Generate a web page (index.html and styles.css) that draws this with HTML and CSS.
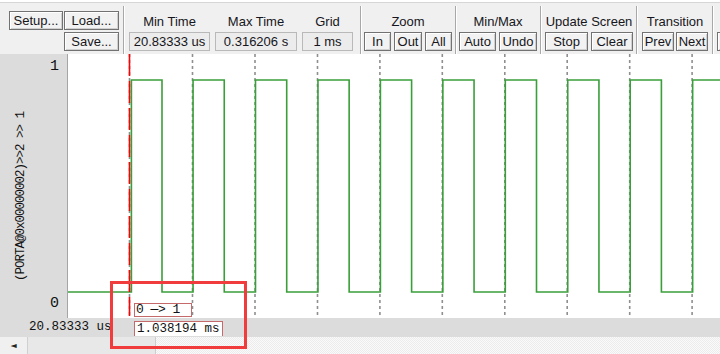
FILE: index.html
```html
<!DOCTYPE html>
<html lang="en">
<head>
  <meta charset="UTF-8">
  <title>Logic Analyzer</title>
  <link rel="stylesheet" href="styles.css">
</head>
<body>
  <div class="window">
    <div class="toolbar">
      <div class="group g-file">
        <div class="btn">Setup...</div>
        <div class="btn">Load...</div>
        <div class="btn save">Save...</div>
      </div>
      <div class="sep"></div>
      <div class="group g-time">
        <div class="lbl">Min Time</div>
        <div class="lbl">Max Time</div>
        <div class="lbl">Grid</div>
        <div class="val">20.83333 us</div>
        <div class="val">0.316206 s</div>
        <div class="val">1 ms</div>
      </div>
      <div class="sep"></div>
      <div class="group g-zoom">
        <div class="lbl wide">Zoom</div>
        <div class="btn">In</div>
        <div class="btn">Out</div>
        <div class="btn">All</div>
      </div>
      <div class="sep"></div>
      <div class="group g-minmax">
        <div class="lbl wide">Min/Max</div>
        <div class="btn">Auto</div>
        <div class="btn">Undo</div>
      </div>
      <div class="sep"></div>
      <div class="group g-update">
        <div class="lbl wide">Update Screen</div>
        <div class="btn">Stop</div>
        <div class="btn">Clear</div>
      </div>
      <div class="sep"></div>
      <div class="group g-trans">
        <div class="lbl wide">Transition</div>
        <div class="btn">Prev</div>
        <div class="btn">Next</div>
      </div>
      <div class="sep"></div>
      <div class="group g-more">
        <div class="btn save"></div>
      </div>
    </div>

    <div class="scope">
      <div class="axis">
        <div class="hi">1</div>
        <div class="name">(PORTA@0x00000002)&gt;&gt;2 &gt;&gt; 1</div>
        <div class="lo">0</div>
      </div>
      <div class="plot">
        <svg width="652" height="264" viewBox="0 0 652 264">
          <g class="grid">
            <line x1="61.5" y1="0" x2="61.5" y2="262"/>
            <line x1="124.5" y1="0" x2="124.5" y2="262"/>
            <line x1="187" y1="0" x2="187" y2="262"/>
            <line x1="249.5" y1="0" x2="249.5" y2="262"/>
            <line x1="311.9" y1="0" x2="311.9" y2="262"/>
            <line x1="374.3" y1="0" x2="374.3" y2="262"/>
            <line x1="436.8" y1="0" x2="436.8" y2="262"/>
            <line x1="499.2" y1="0" x2="499.2" y2="262"/>
            <line x1="561.7" y1="0" x2="561.7" y2="262"/>
            <line x1="624.1" y1="0" x2="624.1" y2="262"/>
          </g>
          <path class="wave" d="M0 238 H63.4 V26 H94 V238 H125.05 V26 H156.25 V238 H187.5 V26 H218.7 V238 H249.95 V26 H281.15 V238 H312.4 V26 H343.6 V238 H374.85 V26 H406.05 V238 H437.3 V26 H468.5 V238 H499.75 V26 H530.95 V238 H562.2 V26 H593.4 V238 H624.65 V26 H652"/>
          <line class="cursor" x1="61.5" y1="0" x2="61.5" y2="262"/>
        </svg>
        <div class="flag">0 &mdash;&gt; 1</div>
      </div>
    </div>

    <div class="strip">
      <span class="start">20.83333 us</span>
      <span class="delta">1.038194 ms</span>
    </div>

    <div class="scroll">
      <div class="arrow">&#9668;</div>
      <div class="thumb"></div>
      <div class="track"></div>
    </div>

    <div class="mark"></div>
  </div>
</body>
</html>
```
FILE: styles.css
```css
body {
  margin: 0;
  background: #fff;
  font-family: "Liberation Sans", Arial, sans-serif;
  font-size: 13px;
  color: #161620;
}
.window {
  position: relative;
  width: 720px;
  height: 354px;
  overflow: hidden;
}

/* toolbar */
.toolbar {
  display: flex;
  height: 51px;
  margin-top: 2px;
  border-top: 1px solid #d6d6d6;
  background: #f0f0f0;
  overflow: hidden;
}
.group {
  display: grid;
  grid-template-rows: 19px 19px;
  row-gap: 2px;
  column-gap: 3px;
  padding-top: 8px;
  align-content: start;
}
.sep {
  width: 0;
  border-left: 1px solid #a8a8a8;
  border-right: 1px solid #fff;
  margin-top: 3px;
}
.btn {
  border: 1px solid #727272;
  box-shadow: inset 1px 1px 0 #fff, inset -1px -1px 0 #cfcfcf;
  background: #f2f2f2;
  text-align: center;
  line-height: 17px;
  white-space: nowrap;
  overflow: hidden;
}
.lbl {
  text-align: center;
  line-height: 19px;
  padding-top: 1px;
  white-space: nowrap;
}
.lbl.wide {
  grid-column: 1 / -1;
}
.val {
  border: 1px solid #b9b9b9;
  background: #ececec;
  text-align: center;
  line-height: 18px;
  white-space: nowrap;
}

.g-file {
  margin-left: 9px;
  grid-template-columns: 54px 55px;
  column-gap: 1px;
  margin-right: 4px;
}
.g-file .save {
  grid-column: 2;
}
.g-time {
  margin-left: 4px;
  margin-right: 7px;
  grid-template-columns: 81px 82px 51px;
  column-gap: 5px;
}
.g-zoom {
  margin-left: 2px;
  margin-right: 3px;
  grid-template-columns: 27px 28px 27px;
}
.g-minmax {
  margin-left: 2px;
  margin-right: 3px;
  grid-template-columns: 37px 38px;
}
.g-update {
  margin-left: 3px;
  margin-right: 3px;
  grid-template-columns: 43px 42px;
}
.g-trans {
  margin-left: 4px;
  margin-right: 4px;
  grid-template-columns: 32px 32px;
  column-gap: 2px;
}
.g-more {
  margin-left: 3px;
  grid-template-columns: 30px;
}
.g-more .save {
  grid-column: 1;
  grid-row: 2;
}

/* scope area */
.scope {
  display: flex;
  height: 264px;
}
.axis {
  width: 67px;
  border-right: 1px solid #a5a5a5;
  background: #dcdcdc;
  display: flex;
  flex-direction: column;
  font-family: "Liberation Mono", monospace;
  color: #111;
}
.axis .hi,
.axis .lo {
  text-align: right;
  padding-right: 8px;
  font-size: 15px;
  line-height: 16px;
}
.axis .hi {
  margin-top: 5px;
}
.axis .name {
  writing-mode: vertical-rl;
  transform: rotate(180deg);
  font-size: 12.5px;
  letter-spacing: -1px;
  line-height: 14px;
  margin-top: 37px;
  margin-left: 14px;
  align-self: flex-start;
  white-space: nowrap;
}
.axis .lo {
  margin-top: auto;
  margin-bottom: 6px;
}
.plot {
  position: relative;
  flex: 1;
  background: #fff;
}
.plot svg {
  display: block;
}
.grid line {
  stroke: #8f8f8f;
  stroke-width: 1.6;
  stroke-dasharray: 3 3;
}
.cursor {
  stroke: #f00;
  stroke-width: 1.6;
  stroke-dasharray: 22 5;
}
.wave {
  fill: none;
  stroke: #3a9e3a;
  stroke-width: 1.6;
}
.flag {
  position: absolute;
  left: 66px;
  top: 249px;
  height: 12px;
  width: 55px;
  padding-left: 1px;
  border: 1px solid #c46a6a;
  background: #fff;
  font-family: "Liberation Mono", monospace;
  font-size: 13px;
  letter-spacing: -0.5px;
  line-height: 12px;
  color: #111;
}

/* time strip */
.strip {
  display: flex;
  align-items: flex-start;
  height: 19px;
  background: #dcdcdc;
  font-family: "Liberation Mono", monospace;
  font-size: 12.5px;
  color: #111;
}
.strip .start {
  margin-left: 29px;
  width: 105px;
  line-height: 16px;
  margin-top: 1px;
}
.strip .delta {
  margin-top: 3px;
  height: 14px;
  line-height: 14px;
  padding: 0 2px 0 2px;
  border: 1px solid #c46a6a;
  border-bottom: none;
  background: #fff;
  white-space: nowrap;
}

/* scrollbar */
.scroll {
  display: flex;
  height: 17px;
}
.arrow {
  width: 27px;
  background: #f0f0f0;
  font-family: "DejaVu Sans", sans-serif;
  font-size: 8px;
  line-height: 17px;
  text-align: center;
  color: #222;
}
.thumb {
  width: 127px;
  background: #e8e8e8;
  border-left: 1px solid #d0d0d0;
  border-right: 1px solid #cdcdcd;
}
.track {
  flex: 1;
  background: repeating-conic-gradient(#ececec 0 25%, #fafafa 0 50%) 0 0 / 2px 2px;
}

/* annotation */
.mark {
  position: absolute;
  left: 110px;
  top: 281px;
  width: 131px;
  height: 62px;
  border: 3px solid #f03c3c;
}
```
